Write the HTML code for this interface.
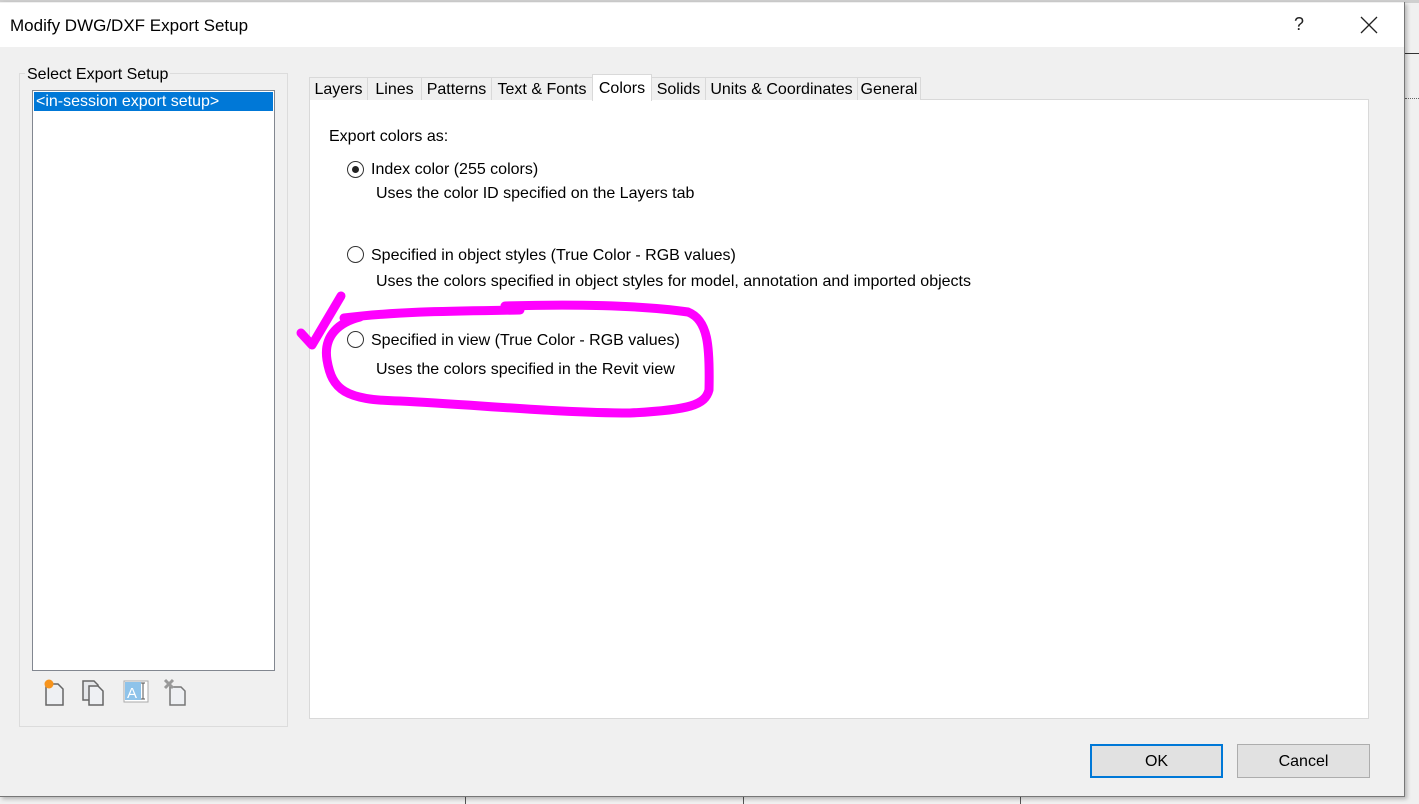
<!DOCTYPE html>
<html><head><meta charset="utf-8"><style>
*{margin:0;padding:0;box-sizing:border-box}
body{width:1419px;height:804px;overflow:hidden;background:#f0f0f0;font-family:"Liberation Sans",sans-serif;font-size:16px;color:#000;position:relative}
.a{position:absolute;white-space:nowrap}
.tab{position:absolute;top:77px;height:23px;border:1px solid #d9d9d9;border-bottom:none;background:#f0f0f0;font-size:16px;line-height:23px;text-align:center}
.rad{position:absolute;width:17px;height:17px;border:1px solid #333;border-radius:50%;background:#fff}
.btn{position:absolute;top:744px;height:34px;background:#e1e1e1;border:1px solid #adadad;text-align:center;line-height:33px;font-size:16px}
</style></head><body>
<div class="a" style="left:0;top:0;width:1419px;height:3px;background:#cfcfcf"></div>
<div class="a" style="left:1405px;top:53px;width:14px;height:1px;background:#333"></div>
<div class="a" style="left:1405px;top:98px;width:14px;border-top:1px dotted #666"></div>
<div class="a" style="left:465px;top:797px;width:1px;height:7px;background:#555"></div>
<div class="a" style="left:743px;top:797px;width:1px;height:7px;background:#555"></div>
<div class="a" style="left:1020px;top:797px;width:1px;height:7px;background:#555"></div>
<div class="a" style="left:0;top:2px;width:1405px;height:795px;background:#f0f0f0;border-right:1px solid #777;border-bottom:1px solid #777;box-shadow:2px 2px 4px rgba(0,0,0,.25)"></div>
<div class="a" style="left:0;top:3px;width:1404px;height:44px;background:#fff"></div>
<div class="a" style="left:10px;top:16px;font-size:17px">Modify DWG/DXF Export Setup</div>
<div class="a" style="left:1294px;top:14px;font-size:18px;color:#222">?</div>
<svg class="a" style="left:1360px;top:16px" width="18" height="18"><path d="M1 1L17 17M17 1L1 17" stroke="#222" stroke-width="1.3"/></svg>

<div class="a" style="left:19px;top:73px;width:269px;height:654px;border:1px solid #dcdcdc"></div>
<div class="a" style="left:25px;top:66px;background:#f0f0f0;padding:0 2px;font-size:16px">Select Export Setup</div>
<div class="a" style="left:32px;top:90px;width:243px;height:581px;background:#fff;border:1px solid #828790"></div>
<div class="a" style="left:34px;top:92px;width:239px;height:19px;background:#0078d7;color:#fff;font-size:16px;line-height:20px;padding-left:2px">&lt;in-session export setup&gt;</div>
<svg class="a" style="left:40px;top:678px" width="150" height="30">
<path d="M6 6h12l5 5v16H6z" fill="#eef0f3" stroke="#666" stroke-width="1.5"/><circle cx="9" cy="6" r="4.5" fill="#f7941d"/>
<path d="M43 3h11l4 4v15H43z" fill="#e5e7ea" stroke="#666" stroke-width="1.5"/><path d="M49 8h9l5 5v14H49z" fill="#eef0f3" stroke="#666" stroke-width="1.5"/>
<rect x="84" y="3" width="24" height="21" fill="#fff" stroke="#aaa"/><rect x="85" y="4" width="16" height="18" fill="#8ec3ea"/><text x="87" y="20" font-size="15" fill="#fff" font-family="Liberation Sans">A</text><path d="M103 5v16M101 5h4M101 21h4" stroke="#555"/>
<path d="M130 9h11l4 4v14H130z" fill="#eef0f3" stroke="#777" stroke-width="1.5"/><path d="M125 2l8 8M133 2l-8 8" stroke="#999" stroke-width="3"/>
</svg>

<div class="a" style="left:309px;top:99px;width:1060px;height:620px;background:#fff;border:1px solid #d9d9d9"></div>
<div class="tab" style="left:309px;width:59px">Layers</div>
<div class="tab" style="left:367px;width:55px">Lines</div>
<div class="tab" style="left:421px;width:71px">Patterns</div>
<div class="tab" style="left:491px;width:102px">Text &amp; Fonts</div>
<div class="tab" style="left:651px;width:55px">Solids</div>
<div class="tab" style="left:705px;width:153px">Units &amp; Coordinates</div>
<div class="tab" style="left:857px;width:64px">General</div>
<div class="tab" style="left:592px;top:74px;height:27px;width:60px;background:#fff;line-height:27px">Colors</div>

<div class="a" style="left:329px;top:128px">Export colors as:</div>
<div class="rad" style="left:347px;top:161px"><div style="position:absolute;left:4px;top:4px;width:7px;height:7px;border-radius:50%;background:#222"></div></div>
<div class="a" style="left:371px;top:161px">Index color (255 colors)</div>
<div class="a" style="left:376px;top:185px">Uses the color ID specified on the Layers tab</div>
<div class="rad" style="left:347px;top:246px"></div>
<div class="a" style="left:371px;top:247px">Specified in object styles (True Color - RGB values)</div>
<div class="a" style="left:376px;top:273px">Uses the colors specified in object styles for model, annotation and imported objects</div>
<div class="rad" style="left:347px;top:331px"></div>
<div class="a" style="left:371px;top:332px">Specified in view (True Color - RGB values)</div>
<div class="a" style="left:376px;top:361px">Uses the colors specified in the Revit view</div>

<svg class="a" style="left:0;top:0" width="1419" height="804" fill="none" stroke="#ff00ff" stroke-width="9" stroke-linecap="round" stroke-linejoin="round">
<path d="M301 333L312 345L341 296"/>
<path d="M344 318C400 311 460 311 520 310"/>
<path d="M505 306C570 304 640 305 688 312C708 320 710 345 709 390C705 405 690 410 630 413C560 413 480 405 400 401C345 400 332 390 327 360C323 335 340 322 360 317"/>
</svg>

<div class="btn" style="left:1090px;width:133px;border:2px solid #0078d7;line-height:31px">OK</div>
<div class="btn" style="left:1237px;width:133px">Cancel</div>
</body></html>
